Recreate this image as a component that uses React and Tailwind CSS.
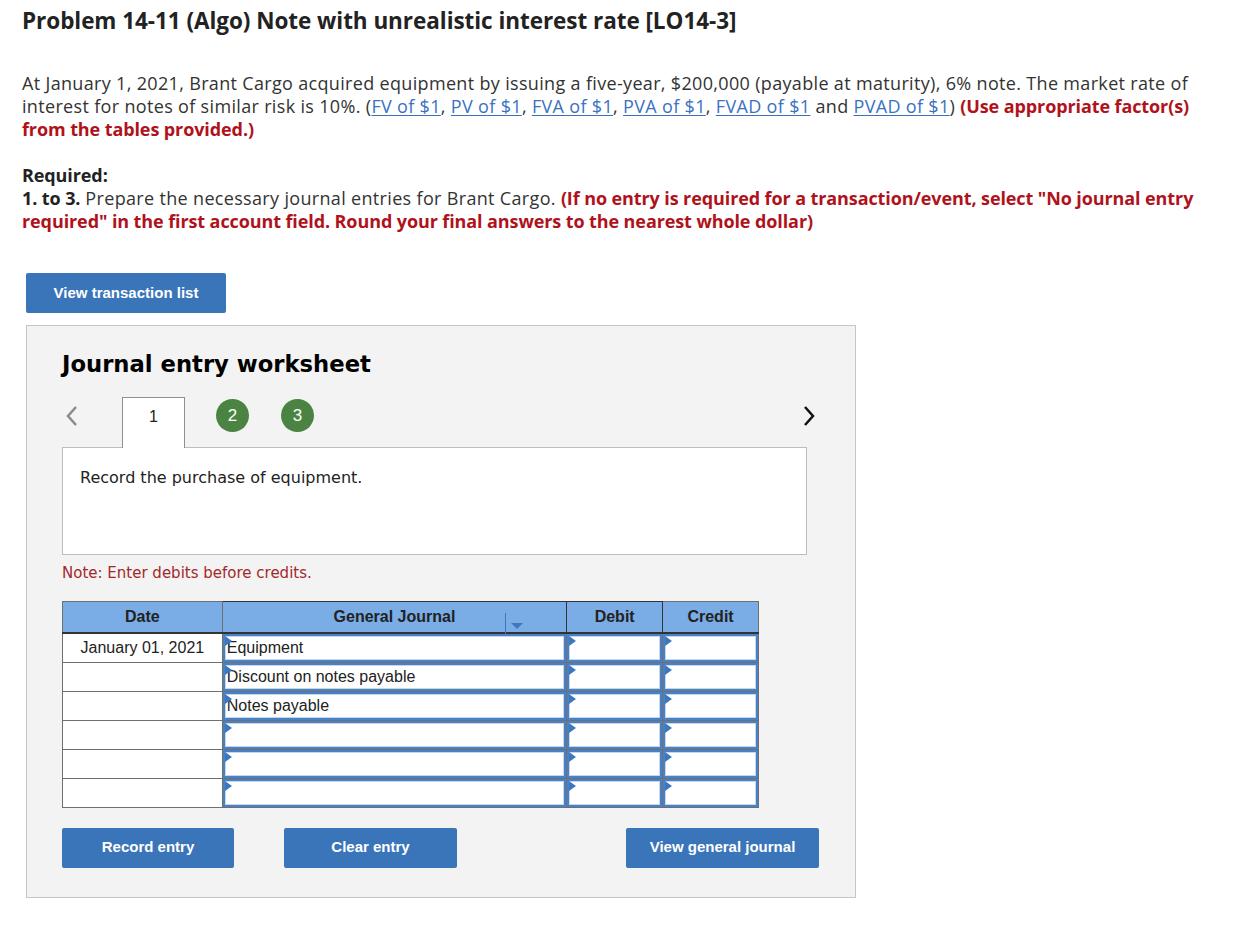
import React from 'react';

const Triangle = () => (
    <svg className="absolute left-0 top-0" width="7" height="10" viewBox="0 0 7 10">
        <path d="M0 0 L7 5 L0 10 Z" fill="#3b78c0" />
    </svg>
);

const InputCell = ({ value }) => (
    <td className="border border-[#6f6f6f] p-0">
        <div className="relative h-[28px] bg-white border-2 border-[#4a80c4] shadow-[inset_0_0_0_1px_#c3d7f0] pl-[2px] flex items-center text-[16px] text-[#222]">
            <Triangle />
            {value}
        </div>
    </td>
);

const Lien = ({ children }) => (
    <span className="text-[#3a72bf] underline underline-offset-2">{children}</span>
);

const lignes = [
    { date: 'January 01, 2021', compte: 'Equipment' },
    { date: '', compte: 'Discount on notes payable' },
    { date: '', compte: 'Notes payable' },
    { date: '', compte: '' },
    { date: '', compte: '' },
    { date: '', compte: '' }
];

const Bouton = ({ children, className }) => (
    <button className={`bg-[#3a75ba] text-white font-bold text-[15px] rounded-[2px] h-[40px] ${className}`} style={{ fontFamily: '"Liberation Sans", Arial, sans-serif' }}>
        {children}
    </button>
);

export default function App() {
    return (
        <div className="bg-white min-h-[931px] pl-[22px] text-[#333]" style={{ fontFamily: '"Open Sans", Lato, sans-serif' }}>
            <h1 className="pt-[7px] text-[22.5px] leading-[28px] font-bold text-[#222] tracking-[-0.05px]">
                Problem 14-11 (Algo) Note with unrealistic interest rate [LO14-3]
            </h1>

            <p className="mt-[37px] text-[18px] leading-[23px] w-[1200px] tracking-[0.33px]">
                At January 1, 2021, Brant Cargo acquired equipment by issuing a five-year, $200,000 (payable at maturity), 6% note. The market rate of interest for notes of similar risk is 10%. (<Lien>FV of $1</Lien>, <Lien>PV of $1</Lien>, <Lien>FVA of $1</Lien>, <Lien>PVA of $1</Lien>, <Lien>FVAD of $1</Lien> and <Lien>PVAD of $1</Lien>) <span className="font-bold text-[#b0121b] tracking-[-0.1px]">(Use appropriate factor(s) from the tables provided.)</span>
            </p>

            <div className="mt-[23px] text-[18px] leading-[23px] w-[1200px] tracking-[0.33px]">
                <div className="font-bold text-[#222] tracking-[-0.1px]">Required:</div>
                <div>
                    <span className="font-bold text-[#222] tracking-[-0.1px]">1. to 3.</span> Prepare the necessary journal entries for Brant Cargo. <span className="font-bold text-[#b0121b] tracking-[-0.1px]">(If no entry is required for a transaction/event, select "No journal entry required" in the first account field. Round your final answers to the nearest whole dollar)</span>
                </div>
            </div>

            <Bouton className="mt-[40px] ml-[4px] w-[200px] block">View transaction list</Bouton>

            <div className="mt-[12px] ml-[4px] w-[830px] bg-[#f3f3f3] border border-[#c6c6c6] pl-[35px] pt-[23px] pb-[29px]">
                <h2 className="text-[22.7px] leading-[30px] font-bold text-black" style={{ fontFamily: '"DejaVu Sans", Verdana, sans-serif' }}>
                    Journal entry worksheet
                </h2>

                <div className="mt-[18px] w-[754px] flex items-start h-[51px] relative z-10">
                    <svg width="14" height="22" viewBox="0 0 14 22" className="ml-[3px] mt-[8px]">
                        <path d="M11 2 L3 11 L11 20" stroke="#8a8a8a" strokeWidth="2.5" fill="none" />
                    </svg>
                    <div className="ml-[43px] w-[63px] h-[51px] bg-white border border-[#8f8f8f] border-b-0 flex justify-center pt-[9px] text-[16px] leading-[20px] text-[#222]" style={{ fontFamily: '"Liberation Sans", Arial, sans-serif' }}>
                        1
                    </div>
                    <div className="ml-[31px] mt-[2px] w-[33px] h-[33px] rounded-full bg-[#4b8442] text-white flex items-center justify-center text-[17px]" style={{ fontFamily: '"Liberation Sans", Arial, sans-serif' }}>2</div>
                    <div className="ml-[32px] mt-[2px] w-[33px] h-[33px] rounded-full bg-[#4b8442] text-white flex items-center justify-center text-[17px]" style={{ fontFamily: '"Liberation Sans", Arial, sans-serif' }}>3</div>
                    <svg width="14" height="22" viewBox="0 0 14 22" className="ml-auto mt-[8px]">
                        <path d="M3 2 L11 11 L3 20" stroke="#111" strokeWidth="2.5" fill="none" />
                    </svg>
                </div>

                <div className="-mt-px w-[745px] h-[108px] bg-white border border-[#bdbdbd] px-[17px] pt-[18px] text-[16px] text-[#222]" style={{ fontFamily: '"DejaVu Sans", Verdana, sans-serif' }}>
                    Record the purchase of equipment.
                </div>

                <div className="mt-[8px] text-[15px] leading-[20px] text-[#a3282b]" style={{ fontFamily: '"DejaVu Sans", Verdana, sans-serif' }}>
                    Note: Enter debits before credits.
                </div>

                <table className="mt-[18px] w-[697px] border-collapse text-[16px] text-[#222]" style={{ fontFamily: '"Liberation Sans", Arial, sans-serif' }}>
                    <thead>
                        <tr className="bg-[#7aace5] h-[31px]">
                            <th className="w-[160px] border border-[#6f6f6f] border-b-2 border-b-[#333] font-bold">Date</th>
                            <th className="w-[345px] border border-[#333] border-l-[#6f6f6f] border-b-2 font-bold relative">
                                <span>General Journal</span>
                                <span className="absolute left-[282px] top-[11px] w-px h-[22px] bg-[#3b78c0]" />
                                <svg className="absolute left-[288px] top-[21px]" width="12" height="6" viewBox="0 0 12 6">
                                    <path d="M0 0 L12 0 L6 6 Z" fill="#3b78c0" />
                                </svg>
                            </th>
                            <th className="w-[96px] border border-[#333] border-b-2 font-bold">Debit</th>
                            <th className="w-[96px] border border-[#6f6f6f] border-b-2 border-b-[#333] border-l-[#333] font-bold">Credit</th>
                        </tr>
                    </thead>
                    <tbody>
                        {lignes.map((ligne, i) => (
                            <tr key={i}>
                                <td className="border border-[#6f6f6f] bg-white text-center p-0">{ligne.date}</td>
                                <InputCell value={ligne.compte} />
                                <InputCell value="" />
                                <InputCell value="" />
                            </tr>
                        ))}
                    </tbody>
                </table>

                <div className="mt-[20px] flex w-[757px]">
                    <Bouton className="w-[172px]">Record entry</Bouton>
                    <Bouton className="ml-[50px] w-[173px]">Clear entry</Bouton>
                    <Bouton className="ml-auto w-[193px]">View general journal</Bouton>
                </div>
            </div>
        </div>
    );
}
